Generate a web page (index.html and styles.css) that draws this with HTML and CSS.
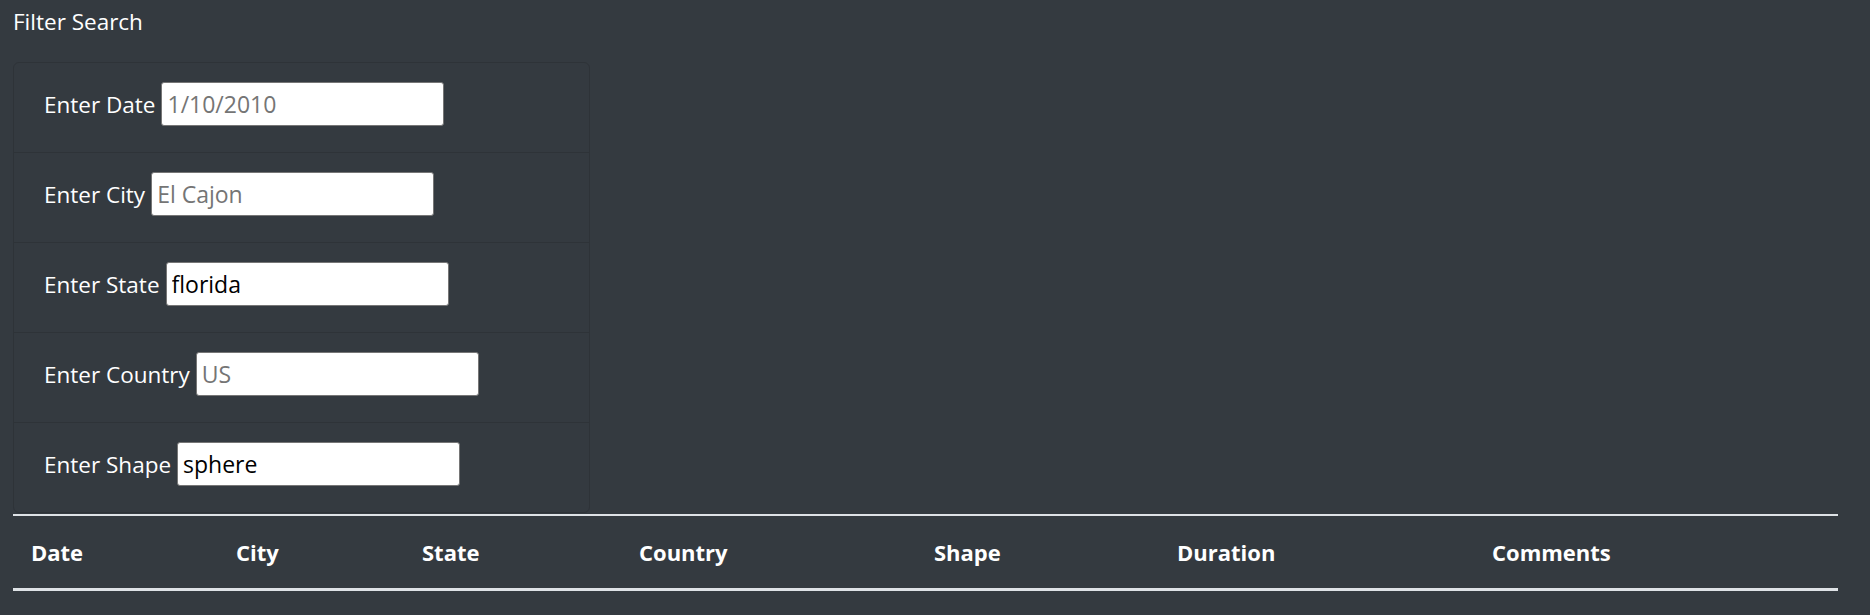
FILE: index.html
```html
<!DOCTYPE html>
<html lang="en">
<head>
<meta charset="utf-8">
<title>UFO Sightings</title>
<link rel="stylesheet" href="styles.css">
</head>
<body>
<div class="page">
  <h1 class="title">Filter Search</h1>
  <div class="filter-card">
    <div class="filter-row">
      <label class="filter-label" for="date">Enter Date</label>
      <input class="filter-input" id="date" type="text" placeholder="1/10/2010">
    </div>
    <div class="filter-row">
      <label class="filter-label" for="city">Enter City</label>
      <input class="filter-input" id="city" type="text" placeholder="El Cajon">
    </div>
    <div class="filter-row">
      <label class="filter-label" for="state">Enter State</label>
      <input class="filter-input" id="state" type="text" value="florida">
    </div>
    <div class="filter-row">
      <label class="filter-label" for="country">Enter Country</label>
      <input class="filter-input" id="country" type="text" placeholder="US">
    </div>
    <div class="filter-row">
      <label class="filter-label" for="shape">Enter Shape</label>
      <input class="filter-input" id="shape" type="text" value="sphere">
    </div>
  </div>
  <table class="ufo-table">
    <thead>
      <tr>
        <th class="col-date">Date</th>
        <th class="col-city">City</th>
        <th class="col-state">State</th>
        <th class="col-country">Country</th>
        <th class="col-shape">Shape</th>
        <th class="col-duration">Duration</th>
        <th class="col-comments">Comments</th>
      </tr>
    </thead>
    <tbody></tbody>
  </table>
</div>
</body>
</html>
```

FILE: styles.css
```css
html, body {
  margin: 0;
  padding: 0;
  background: #343a40;
  color: #ffffff;
  font-family: "Open Sans", "Noto Sans", "Liberation Sans", sans-serif;
  font-size: 22px;
}

.page {
  padding: 5px 32px 0 13px;
}

.title {
  margin: 0 0 24px 0;
  font-size: 22.5px;
  font-weight: 400;
  line-height: 33px;
}

.filter-card {
  width: 577px;
  box-sizing: border-box;
  border: 1px solid #2e3338;
  border-radius: 6px;
}

.filter-row {
  display: flex;
  align-items: baseline;
  gap: 6px;
  height: 89px;
  box-sizing: border-box;
  padding: 19px 30px 0 30px;
}

.filter-row + .filter-row {
  border-top: 1px solid #2e3338;
  height: 90px;
}

.filter-label {
  font-size: 22.5px;
  line-height: 1.2;
  color: #ffffff;
}

.filter-input {
  width: 283px;
  height: 44px;
  box-sizing: border-box;
  border: 1px solid #767676;
  border-radius: 3px;
  padding: 0 5px;
  background: #ffffff;
  color: #000000;
  font-family: "Open Sans", "Noto Sans", "Liberation Sans", sans-serif;
  font-size: 23px;
  outline: none;
}

.filter-input::placeholder {
  color: #757575;
}

.ufo-table {
  width: 100%;
  border-collapse: collapse;
  table-layout: fixed;
  margin-top: 1px;
}

.ufo-table th {
  box-sizing: border-box;
  text-align: left;
  font-weight: 700;
  font-size: 22px;
  line-height: 36px;
  padding: 18px 18px;
  border-top: 2px solid #dee2e6;
  border-bottom: 3px solid #dee2e6;
  color: #ffffff;
}

.col-date { width: 205px; }
.col-city { width: 186px; }
.col-state { width: 217px; }
.col-country { width: 295px; }
.col-shape { width: 243px; }
.col-duration { width: 315px; }
.col-comments { width: auto; }
```
